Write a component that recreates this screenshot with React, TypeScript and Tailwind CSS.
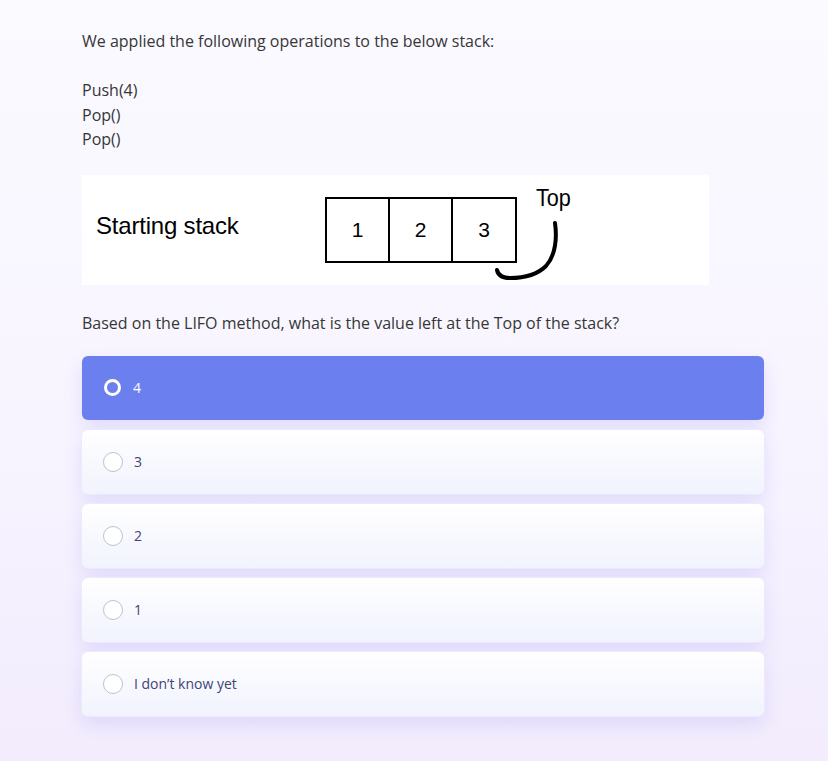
const options = [
  { label: "4", selected: true },
  { label: "3", selected: false },
  { label: "2", selected: false },
  { label: "1", selected: false },
  { label: "I don’t know yet", selected: false },
];

const StackDiagram = () => {
  return (
    <div className="relative h-[110px] w-[627px] bg-white font-['Liberation_Sans',Arial,sans-serif] text-black">
      <div className="flex items-start">
        <div className="ml-[14px] mt-[36px] w-[229px] text-[24px] leading-[30px] tracking-[-0.2px]">
          Starting stack
        </div>
        <div className="mt-[22px] flex h-[66px] border-2 border-black">
          <div className="flex w-[63px] items-center justify-center border-r-2 border-black text-[21px]">1</div>
          <div className="flex w-[63px] items-center justify-center border-r-2 border-black text-[21px]">2</div>
          <div className="flex w-[62px] items-center justify-center text-[21px]">3</div>
        </div>
        <div className="ml-[19px] mt-[9px] origin-left scale-x-[0.9] text-[24px] leading-[28px]">Top</div>
      </div>
      <svg className="absolute left-0 top-0" width="627" height="110" viewBox="0 0 627 110" fill="none">
        <path
          d="M473 48 C475 62 474 80 464 91 C454 101 440 103 428 103 C420 103 416 100 415 95"
          stroke="#000"
          strokeWidth="4"
          strokeLinecap="round"
        />
      </svg>
    </div>
  );
};

const Option = ({ label, selected }: { label: string; selected: boolean }) => {
  return (
    <div
      className={
        selected
          ? "flex h-[64px] items-center rounded-[6px] bg-[#6b7fee] pl-[21px] shadow-[0_8px_18px_rgba(150,135,240,0.22)]"
          : "flex h-[64px] items-center rounded-[6px] bg-gradient-to-b from-white to-[#f1f3fe] pl-[21px] shadow-[0_8px_18px_rgba(150,135,240,0.22)] ring-1 ring-[#eceafb]"
      }
    >
      {selected ? (
        <span className="ml-[1px] h-[17px] w-[17px] rounded-full border-[3px] border-white" />
      ) : (
        <span className="h-[20px] w-[20px] rounded-full border-[1.5px] border-[#b8c4cc] bg-white" />
      )}
      <span
        className={
          selected
            ? "ml-[12px] text-[14px] font-medium text-white"
            : "ml-[11px] text-[14px] text-[#3e4474]"
        }
      >
        {label}
      </span>
    </div>
  );
};

export default function App() {
  return (
    <div className="min-h-screen bg-gradient-to-b from-[#fbfaff] via-[#f8f5ff] to-[#f2ecfd] font-['Open_Sans','Lato',sans-serif]">
      <div className="w-[682px] pb-[44px] pl-[82px] pt-[29px] box-content">
        <div className="text-[16px] leading-[24.5px] text-[#363636]">
          <p>We applied the following operations to the below stack:</p>
          <p>&nbsp;</p>
          <p>Push(4)</p>
          <p>Pop()</p>
          <p>Pop()</p>
        </div>
        <div className="mt-[23px]">
          <StackDiagram />
        </div>
        <p className="mt-[26px] text-[16px] leading-[24px] text-[#363636]">
          Based on the LIFO method, what is the value left at the Top of the stack?
        </p>
        <div className="mt-[21px] flex flex-col gap-[10px]">
          {options.map((o) => (
            <Option key={o.label} label={o.label} selected={o.selected} />
          ))}
        </div>
      </div>
    </div>
  );
}
